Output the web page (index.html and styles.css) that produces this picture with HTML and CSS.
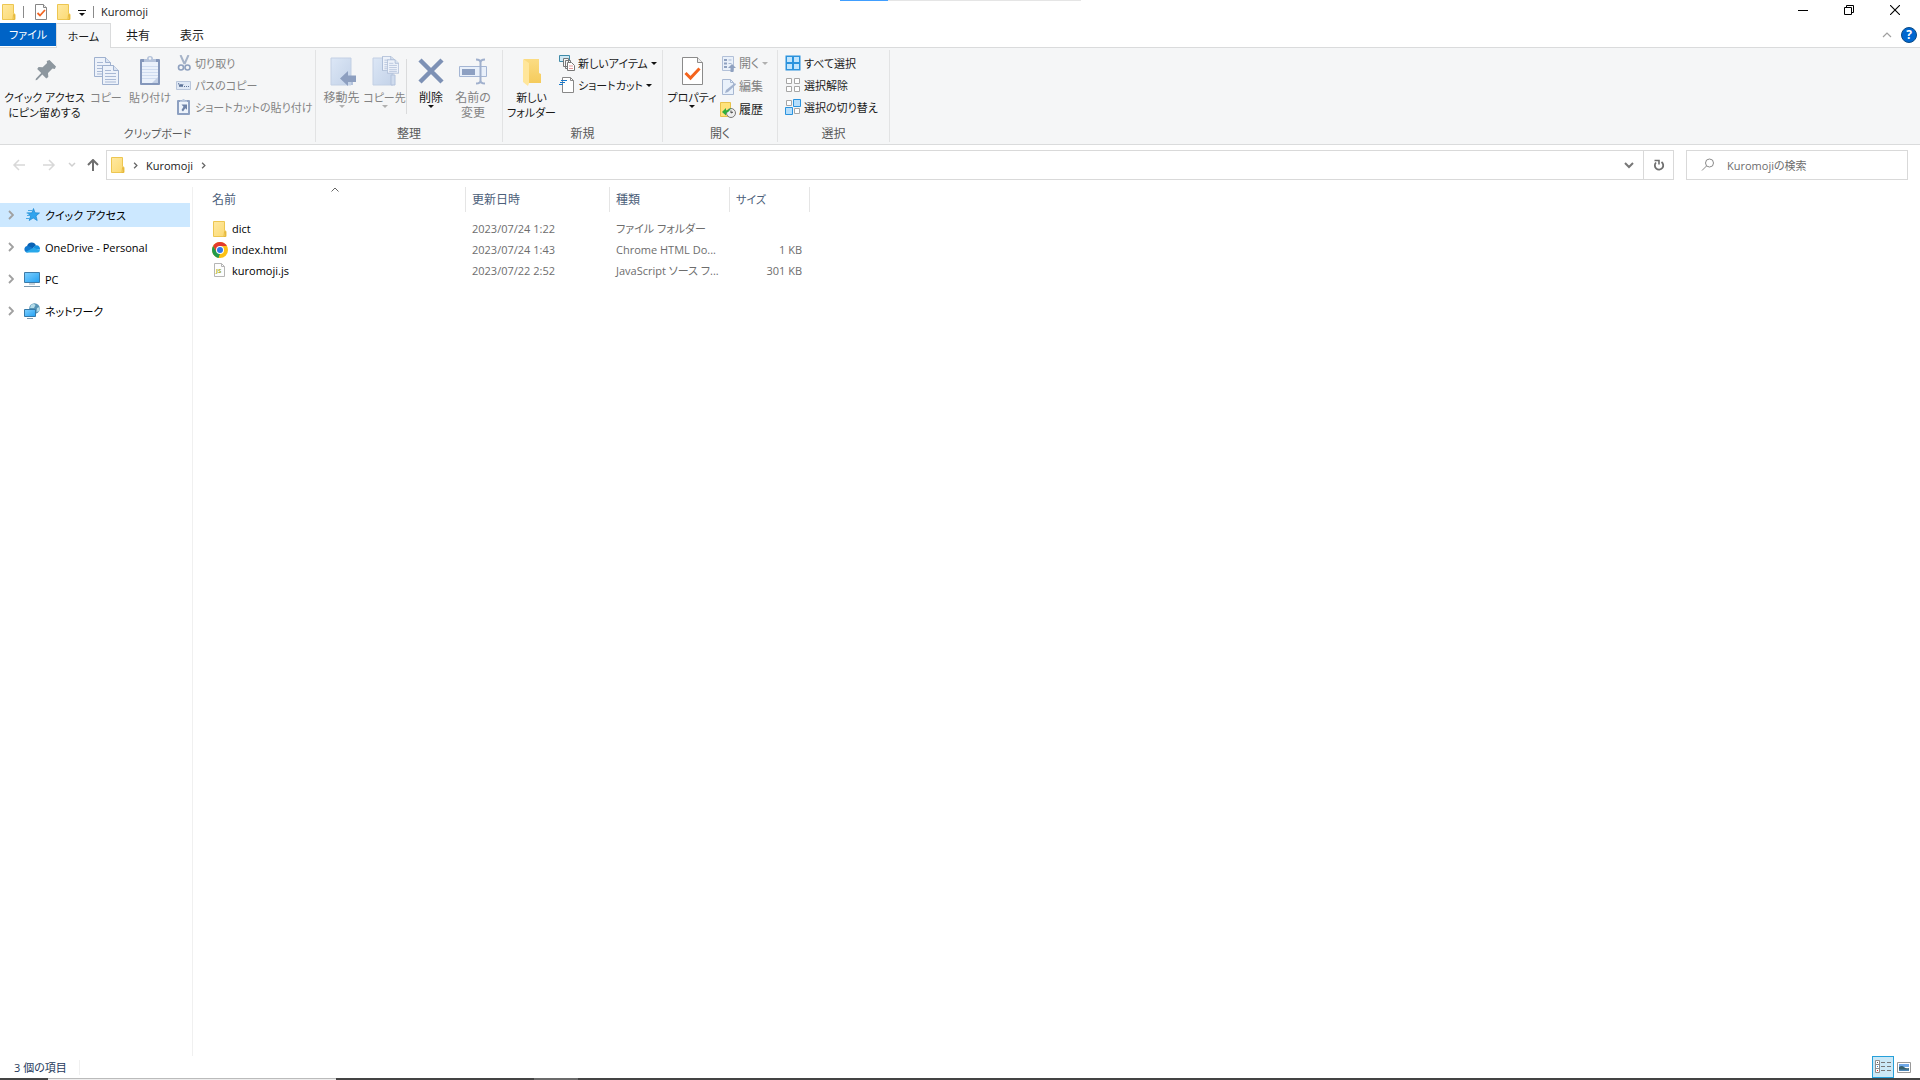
FILE: index.html
```html
<!DOCTYPE html>
<html lang="ja">
<head>
    <meta charset="UTF-8">
    <meta name="viewport" content="width=device-width, initial-scale=1.0">
    <title>Kuromoji</title>
    <link rel="stylesheet" href="styles.css">
</head>
<body>
    <!-- 共通アイコン -->
    <svg class="defs" aria-hidden="true">
        <defs>
            <linearGradient id="g-folder" x1="0" y1="0" x2="1" y2="1">
                <stop offset="0" stop-color="#ffe9a2"/>
                <stop offset="1" stop-color="#fbd970"/>
            </linearGradient>
            <linearGradient id="g-gold" x1="0" y1="0" x2="0" y2="1">
                <stop offset="0" stop-color="#fbdc83"/>
                <stop offset="1" stop-color="#f5cb5c"/>
            </linearGradient>
            <linearGradient id="g-blue" x1="0" y1="0" x2="1" y2="1">
                <stop offset="0" stop-color="#7fd0ff"/>
                <stop offset="1" stop-color="#22a0f2"/>
            </linearGradient>
            <linearGradient id="g-pale" x1="0" y1="0" x2="1" y2="1">
                <stop offset="0" stop-color="#dce7f6"/>
                <stop offset="1" stop-color="#c3d2e8"/>
            </linearGradient>
        </defs>
        <symbol id="folder" viewBox="0 0 14 16">
            <path d="M.5.5h11v9l1.500.8v5.200H.5z" fill="url(#g-folder)" stroke="#edc651"/>
            <path d="M11.500 10.500h1v5h-1.500z" fill="#fde38f" stroke="#e6b93c"/>
        </symbol>
        <symbol id="check-doc" viewBox="0 0 12 16">
            <path d="M.5.5h8l3 3v12H.5z" fill="#fff" stroke="#868686"/>
            <path d="M8.500.5v3h3" fill="#eee" stroke="#868686"/>
            <path d="M2.500 9l2.500 2.500L10 6" fill="none" stroke="#f26522" stroke-width="1.800"/>
        </symbol>
        <symbol id="chevron" viewBox="0 0 6 10">
            <path d="M1 1l4 4-4 4" fill="none" stroke="currentColor" stroke-width="1.800"/>
        </symbol>
        <symbol id="page" viewBox="0 0 17 20">
            <path d="M.5.5h11l5 5v14H.5z" fill="#edf2fa" stroke="#9fb1cf"/>
            <path d="M11.500.5v5h5" fill="#dbe4f2" stroke="#9fb1cf"/>
            <path d="M3 5.500h6M3 8.500h11M3 11.500h11M3 14.500h11M3 17h11" stroke="#a9b9d5"/>
        </symbol>
    </svg>

    <div class="loader"><span></span></div>

    <header class="titlebar">
        <svg width="14" height="16"><use href="#folder"/></svg>
        <span class="sep"></span>
        <button class="quick" aria-label="プロパティ"><svg width="12" height="16"><use href="#check-doc"/></svg></button>
        <button class="quick" aria-label="新しいフォルダー"><svg width="14" height="16"><use href="#folder"/></svg></button>
        <button class="quick customize" aria-label="カスタマイズ">
            <svg width="8" height="8" viewBox="0 0 8 8"><path d="M0 1.500h8" stroke="#111"/><path d="M1 4h6L4 7z" fill="#111"/></svg>
        </button>
        <span class="sep"></span>
        <h1>Kuromoji</h1>
        <div class="window-buttons">
            <button aria-label="最小化"><svg width="10" height="10" viewBox="0 0 10 10"><path d="M0 5.500h10" stroke="#000"/></svg></button>
            <button aria-label="元に戻す"><svg width="10" height="10" viewBox="0 0 10 10"><path d="M.5 2.500h7v7h-7zM2.500 2.500v-2h7v7h-2" fill="none" stroke="#000"/></svg></button>
            <button aria-label="閉じる"><svg width="10" height="10" viewBox="0 0 10 10"><path d="M0 0l10 10M10 0L0 10" stroke="#000" stroke-width="1.100"/></svg></button>
        </div>
    </header>

    <nav class="tabs">
        <button class="tab file">ファイル</button>
        <button class="tab active">ホーム</button>
        <button class="tab kanji">共有</button>
        <button class="tab kanji">表示</button>
        <div class="tabs-right">
            <button aria-label="リボンの最小化"><svg width="10" height="6" viewBox="0 0 10 6"><path d="M1 5l4-4 4 4" fill="none" stroke="#a0a0a0" stroke-width="1.200"/></svg></button>
            <button class="help" aria-label="ヘルプ">?</button>
        </div>
    </nav>

    <section class="ribbon">
        <div class="group g-clipboard">
            <div class="group-body">
                <button class="big wide">
                    <svg width="32" height="32" viewBox="0 0 32 32"><path d="M20.500 5l6.500 6.500-1.200 2.500-2.300-.4-4.500 4.500.3 4-2 1.400-4-4L8 25l-1.500.2L7 23.500l5.200-5.500-4-4 1.400-2 4 .3 4.500-4.400-.4-2z" fill="#8d979f"/></svg>
                    <span>クイック アクセス<br>にピン留めする</span>
                </button>
                <button class="big w-copy" disabled>
                    <svg width="32" height="32" viewBox="0 0 32 32">
                        <use href="#page" x="4" y="2" width="17" height="20"/>
                        <use href="#page" x="12" y="10" width="17" height="20"/>
                    </svg>
                    <span>コピー</span>
                </button>
                <button class="big w-paste" disabled>
                    <svg width="32" height="32" viewBox="0 0 32 32">
                        <rect x="6" y="4" width="20" height="26" rx="1" fill="#8497bb"/>
                        <path d="M8 7h16v21H8z" fill="#eaf1fb"/>
                        <path d="M8 11.500h16M8 14.500h16M8 17.500h16M8 20.500h16M8 23.500h16" stroke="#cfdcf0"/>
                        <path d="M18 28h6v-6z" fill="#c3d0e6"/>
                        <path d="M10 7V4h3a3 3 0 0 1 6 0h3v3z" fill="#b5c3db"/>
                        <circle cx="16" cy="3.500" r="1.200" fill="#f5f6f7"/>
                    </svg>
                    <span>貼り付け</span>
                </button>
                <div class="small-list">
                    <button disabled>
                        <svg width="16" height="16" viewBox="0 0 16 16"><path d="M4.500 0l4 9M12.500 0l-4 9" stroke="#a6b3c8" stroke-width="2"/><circle cx="5" cy="12.500" r="2.500" fill="none" stroke="#8fa1bf" stroke-width="1.600"/><circle cx="11.500" cy="12.500" r="2.500" fill="none" stroke="#8fa1bf" stroke-width="1.600"/></svg>
                        切り取り
                    </button>
                    <button disabled>
                        <svg width="16" height="16" viewBox="0 0 16 16"><path d="M.5 4.500h14v8H.5z" fill="#dfe8f5" stroke="#b9c6db"/><path d="M2.500 6l1.500 4 1-3 1 3 1-3M8 9.500h1M10 9.500h1M12 9.500h1" fill="none" stroke="#5e7499"/></svg>
                        パスのコピー
                    </button>
                    <button disabled>
                        <svg width="16" height="16" viewBox="0 0 16 16"><rect x="1" y="1" width="13" height="15" rx="1" fill="#8da0c1"/><path d="M3 3h9v11H3z" fill="#edf3fb"/><path d="M4 3V1.500h2a1.500 1.500 0 0 1 3 0h2V3z" fill="#b8c6dd"/><path d="M5.500 5.500H11v5.300L9.300 9.300 7 12.500 5.500 11l2-3.300z" fill="#6d82a8"/></svg>
                        ショートカットの貼り付け
                    </button>
                </div>
            </div>
            <div class="group-label">クリップボード</div>
        </div>

        <div class="group g-organize">
            <div class="group-body">
                <button class="big w-move kanji" disabled>
                    <svg width="32" height="32" viewBox="0 0 32 32"><path d="M5 3h20v27H5z" fill="url(#g-pale)" stroke="#c3d0e4"/><path d="M25 24h2v6h-2z" fill="#b3c2dc"/><path d="M14 23.500l8-7.500v4.500h8v6.500h-8V31z" fill="#8d9fc0"/></svg>
                    <span>移動先</span>
                    <i class="caret"></i>
                </button>
                <button class="big w-move" disabled>
                    <svg width="32" height="32" viewBox="0 0 32 32"><path d="M4 3h20v27H4z" fill="url(#g-pale)" stroke="#c3d0e4"/><path d="M22 20h4v10h-4z" fill="#cfdbed" stroke="#b3c2dc"/><use href="#page" x="13" y="1" width="13" height="15"/><use href="#page" x="18" y="4" width="12" height="15"/></svg>
                    <span>コピー先</span>
                    <i class="caret"></i>
                </button>
                <span class="divider"></span>
                <button class="big w-delete kanji">
                    <svg width="32" height="32" viewBox="0 0 32 32"><path d="M5 5l22 22M27 5L5 27" stroke="#7d91b5" stroke-width="4.500"/></svg>
                    <span>削除</span>
                    <i class="caret"></i>
                </button>
                <button class="big w-rename kanji" disabled>
                    <svg width="32" height="32" viewBox="0 0 32 32"><path d="M2.500 11.500h27v10h-27z" fill="#e9f0fa" stroke="#a5b6d4"/><path d="M5 14h13v6H5z" fill="#8da0c2"/><path d="M19 4.500q4.500 0 4.500 3v18q0 3-4.500 3M28 4.500q-4.500 0-4.500 3v18q0 3 4.500 3" fill="none" stroke="#a0b0cd" stroke-width="2"/></svg>
                    <span>名前の<br>変更</span>
                </button>
            </div>
            <div class="group-label kanji">整理</div>
        </div>

        <div class="group g-new">
            <div class="group-body">
                <button class="big w-new">
                    <svg width="32" height="32" viewBox="0 0 32 32"><path d="M8 4h15v14l2 1v9H9z" fill="url(#g-gold)"/><path d="M7 4l6 4v20l-1 3-5-4z" fill="#ffe69b"/></svg>
                    <span>新しい<br>フォルダー</span>
                </button>
                <div class="small-list">
                    <button>
                        <svg width="16" height="16" viewBox="0 0 16 16"><path d="M.5.5h10v6H.5z" fill="#cfe9f5" stroke="#3f8aa8"/><path d="M4.500 3.500h5v8h-5zM6.500 5.500h5v8h-5z" fill="#f6f6f6" stroke="#777"/><path d="M8.500 7.500h4l3 3v5h-7z" fill="#fff" stroke="#777"/><path d="M10 11h4M10 13.500h4" stroke="#e79b9b"/></svg>
                        新しいアイテム<i class="caret"></i>
                    </button>
                    <button>
                        <svg width="16" height="16" viewBox="0 0 16 16"><path d="M3.500.5h8l3 3v12h-11z" fill="#fff" stroke="#888"/><path d="M11.500.5v3h3" fill="none" stroke="#888"/><path d="M2 3.500h6M1 5.500h5M0 7.500h4" stroke="#1979ca"/></svg>
                        ショートカット<i class="caret"></i>
                    </button>
                </div>
            </div>
            <div class="group-label kanji">新規</div>
        </div>

        <div class="group g-open">
            <div class="group-body">
                <button class="big w-prop">
                    <svg width="32" height="32" viewBox="0 0 32 32"><path d="M6.500 2.500h15l5 5v22h-20z" fill="#fff" stroke="#8b8b8b"/><path d="M21.500 2.500v5h5" fill="#eee" stroke="#8b8b8b"/><path d="M9.500 18l5 5 9-9.500" fill="none" stroke="#f4641e" stroke-width="3"/></svg>
                    <span>プロパティ</span>
                    <i class="caret"></i>
                </button>
                <div class="small-list loose kanji">
                    <button disabled>
                        <svg width="16" height="16" viewBox="0 0 16 16"><path d="M2.500.5h11v14h-11z" fill="#eaf1fa" stroke="#b2c0d8"/><path d="M4 3h3v2H4zM4 6.500h3v2H4zM4 10h3v2H4z" fill="#8fa1c0"/><path d="M8.500 4h3M8.500 7.500h3" stroke="#a7b7d1"/><path d="M12 8l4 4h-2.500v4h-3v-4H8z" fill="#8fa1c0"/></svg>
                        開く<i class="caret"></i>
                    </button>
                    <button disabled>
                        <svg width="16" height="16" viewBox="0 0 16 16"><path d="M2.500.5h8l3 3v12h-11z" fill="#e9f1fb" stroke="#a8b8d2"/><path d="M10.500.5v3h3" fill="none" stroke="#a8b8d2"/><path d="M5 14l1-3 9-7 1 1.500-8 7.500z" fill="#a3b3ce"/></svg>
                        編集
                    </button>
                    <button>
                        <svg width="16" height="16" viewBox="0 0 16 16"><path d="M.5.5h10v14H.5z" fill="#ffe27a" stroke="#e8c14b"/><circle cx="11" cy="11" r="4.500" fill="#eee" stroke="#777"/><path d="M11 8.500V11l2-1" fill="none" stroke="#444"/><path d="M2 10l4-4v2.500q2.500-1 5-2.500-1.500 4-5 5v2.500z" fill="#2fae3f"/></svg>
                        履歴
                    </button>
                </div>
            </div>
            <div class="group-label kanji">開く</div>
        </div>

        <div class="group g-select">
            <div class="group-body">
                <div class="small-list">
                    <button>
                        <svg width="16" height="16" viewBox="0 0 16 16"><path d="M.5.5h15v15H.5z" fill="#2b93dd"/><path d="M2 2h5v5H2zM9 2h5v5H9zM2 9h5v5H2zM9 9h5v5H9z" fill="#c2e5fd"/></svg>
                        すべて選択
                    </button>
                    <button>
                        <svg width="16" height="16" viewBox="0 0 16 16"><path d="M1.500 1.500h5v5h-5zM9.500 1.500h5v5h-5zM1.500 9.500h5v5h-5zM9.500 9.500h5v5h-5z" fill="#fff" stroke="#a6a6a6"/></svg>
                        選択解除
                    </button>
                    <button>
                        <svg width="16" height="16" viewBox="0 0 16 16"><path d="M1.500 1.500h5v5h-5zM9.500 9.500h5v5h-5z" fill="#fff" stroke="#a6a6a6"/><path d="M8.500.5h7v7h-7zM.5 8.500h7v7h-7z" fill="#b5defc" stroke="#2b93dd"/></svg>
                        選択の切り替え
                    </button>
                </div>
            </div>
            <div class="group-label kanji">選択</div>
        </div>
    </section>

    <div class="addressbar">
        <button class="nav" aria-label="戻る" disabled><svg width="14" height="12" viewBox="0 0 14 12"><path d="M13 6H2M7 1L2 6l5 5" fill="none" stroke="#d8d8d8" stroke-width="1.500"/></svg></button>
        <button class="nav" aria-label="進む" disabled><svg width="14" height="12" viewBox="0 0 14 12"><path d="M1 6h11M7 1l5 5-5 5" fill="none" stroke="#d8d8d8" stroke-width="1.500"/></svg></button>
        <button class="nav recent" aria-label="最近表示した場所" disabled><svg width="8" height="6" viewBox="0 0 8 6"><path d="M1 1l3 3 3-3" fill="none" stroke="#cfcfcf" stroke-width="1.500"/></svg></button>
        <button class="nav up" aria-label="上へ"><svg width="12" height="12" viewBox="0 0 12 12"><path d="M6 12V2M1 6l5-5 5 5" fill="none" stroke="#6e6e6e" stroke-width="2"/></svg></button>
        <div class="address">
            <svg width="14" height="16"><use href="#folder"/></svg>
            <svg class="crumb-arrow" width="5" height="7"><use href="#chevron"/></svg>
            <a href="#">Kuromoji</a>
            <svg class="crumb-arrow" width="5" height="7"><use href="#chevron"/></svg>
            <button class="history" aria-label="以前の場所"><svg width="10" height="7" viewBox="0 0 10 7"><path d="M1 1l4 4 4-4" fill="none" stroke="#777" stroke-width="2"/></svg></button>
            <button class="refresh" aria-label="最新の情報に更新"><svg width="12" height="12" viewBox="0 0 12 12"><path d="M3 3.500A4.200 4.200 0 1 0 8.500 3" fill="none" stroke="#6e6e6e" stroke-width="1.800"/><path d="M1.500 1.500h4.500v4" fill="none" stroke="#6e6e6e" stroke-width="1.600"/></svg></button>
        </div>
        <label class="search">
            <svg width="14" height="14" viewBox="0 0 14 14"><circle cx="8.500" cy="5" r="4" fill="none" stroke="#8a8a8a"/><path d="M5.500 8L1 12.500" stroke="#8a8a8a"/></svg>
            <input type="text" placeholder="Kuromojiの検索" aria-label="Kuromojiの検索">
        </label>
    </div>

    <main class="content">
        <nav class="sidebar">
            <a href="#" class="selected">
                <svg class="chevron" width="6" height="10"><use href="#chevron"/></svg>
                <svg width="16" height="16" viewBox="0 0 16 16"><path d="M9.500 1.500l1.500 4.300 4.500.2-3.500 2.900 1.200 4.600-4-2.500-4 2.500 1.400-4.600L3.500 6l4.400-.2z" fill="#2fa4ee" stroke="#1a86d0" stroke-width=".7"/><path d="M4 3.500h4M2.500 6h3M3 8.500h3M2 11.500h4" stroke="#4aa9e4"/></svg>
                クイック アクセス
            </a>
            <a href="#">
                <svg class="chevron" width="6" height="10"><use href="#chevron"/></svg>
                <svg width="16" height="16" viewBox="0 0 16 16"><path d="M3 7.500a4.700 4.700 0 0 1 9-1.200L8 10z" fill="#0a62b4"/><path d="M3 13.500a3.300 3.300 0 0 1 .3-6.500Q5.500 6.800 10 10l-5 3z" fill="#1279cf"/><path d="M9 9.500q1.500-3.500 4-3.200a3.400 3.400 0 0 1 2.800 4.500z" fill="#1490df"/><path d="M1.500 13L9.500 8.800l6.300 2.200a2.300 2.300 0 0 1-2.300 2.500H3z" fill="#28a8ea"/></svg>
                OneDrive - Personal
            </a>
            <a href="#">
                <svg class="chevron" width="6" height="10"><use href="#chevron"/></svg>
                <svg width="16" height="16" viewBox="0 0 16 16"><path d="M.5 1.500h15v10H.5z" fill="url(#g-blue)" stroke="#3d7ba8"/><path d="M5 13h6" stroke="#8fa5b5"/><path d="M0 15.500h16" stroke="#7b98ad"/></svg>
                PC
            </a>
            <a href="#">
                <svg class="chevron" width="6" height="10"><use href="#chevron"/></svg>
                <svg width="16" height="16" viewBox="0 0 16 16"><circle cx="10.500" cy="5.500" r="5.300" fill="#5593b5"/><path d="M7 2q3-2 4.500 0L10 5H6zM13 5l2.500-1v4l-3 1z" fill="#b4dce9"/><path d="M.5 6.500h11v7H.5z" fill="url(#g-blue)" stroke="#3579a8"/><path d="M3 15.500h6" stroke="#7b98ad"/></svg>
                ネットワーク
            </a>
        </nav>

        <section class="files">
            <table>
                <colgroup><col class="c-name"><col class="c-date"><col class="c-type"><col class="c-size"></colgroup>
                <thead>
                    <tr>
                        <th class="kanji">名前<svg class="sort" width="8" height="5" viewBox="0 0 8 5"><path d="M.5 4.500L4 1l3.500 3.500" fill="none" stroke="#666"/></svg></th>
                        <th class="kanji">更新日時</th>
                        <th class="kanji">種類</th>
                        <th>サイズ</th>
                    </tr>
                </thead>
                <tbody>
                    <tr>
                        <td><span class="name"><svg width="16" height="16"><use href="#folder"/></svg>dict</span></td>
                        <td>2023/07/24 1:22</td>
                        <td>ファイル フォルダー</td>
                        <td></td>
                    </tr>
                    <tr>
                        <td><span class="name"><svg width="16" height="16" viewBox="0 0 16 16"><circle cx="8" cy="8" r="8" fill="#fbc116"/><path d="M1.100 4A8 8 0 0 1 14.900 4H8L4.600 10z" fill="#e33b2e"/><path d="M1.100 4L4.600 10 8 12l-1.200 3.900A8 8 0 0 1 1.100 4z" fill="#229a4b"/><path d="M11.400 10L8 16l-1.500-.2L9 11z" fill="#fbc116"/><circle cx="8" cy="8" r="4" fill="#fff"/><circle cx="8" cy="8" r="3" fill="#2f78ea"/></svg>index.html</span></td>
                        <td>2023/07/24 1:43</td>
                        <td>Chrome HTML Do...</td>
                        <td>1 KB</td>
                    </tr>
                    <tr>
                        <td><span class="name"><svg width="16" height="16" viewBox="0 0 16 16"><path d="M2.500.5h7l3 3v10h-10z" fill="#fdfdfd" stroke="#b5b5b5"/><path d="M9.500.5v3h3" fill="none" stroke="#b5b5b5"/><text x="4" y="10" class="js">JS</text></svg>kuromoji.js</span></td>
                        <td>2023/07/22 2:52</td>
                        <td>JavaScript ソース フ...</td>
                        <td>301 KB</td>
                    </tr>
                </tbody>
            </table>
        </section>
    </main>

    <footer class="statusbar">
        <span class="count">3 個の項目</span>
        <div class="views">
            <button class="on" aria-label="詳細"><svg width="16" height="14" viewBox="0 0 16 14"><path d="M.5.5h4v12h-4zM.5 4.500h4M.5 8.500h4" fill="#fff" stroke="#8c8c8c"/><path d="M6 2.500h4M12 2.500h4M6 6.500h4M12 6.500h4M6 10.500h4M12 10.500h4" stroke="#777"/><path d="M2 2h1v1H2z" fill="#555"/><path d="M2 6h1v1H2z" fill="#2b93dd"/><path d="M2 10h1v1H2z" fill="#d22"/></svg></button>
            <button aria-label="大アイコン"><svg width="14" height="11" viewBox="0 0 14 11"><path d="M.5.5h13v10H.5z" fill="#fff" stroke="#999"/><path d="M2 2h10v3H2z" fill="#6fa8e8"/><path d="M2 5q3-2 5 0t5 1v3H2z" fill="#355f6b"/><path d="M2 7.500h10V9H2z" fill="#4f87b5"/></svg></button>
        </div>
    </footer>

    <div class="taskbar"><span class="t-start"></span><span class="t-search"></span><span class="t-gap"></span><span class="t-app"></span></div>
</body>
</html>
```
FILE: styles.css
```css
/* 全体 */
* {
    box-sizing: border-box;
}

body {
    margin: 0;
    min-height: 100vh;
    display: flex;
    flex-direction: column;
    background: #fff;
    color: #1a1a1a;
    font-family: "Open Sans", "Noto Sans CJK JP", sans-serif;
    font-size: 11px;
    line-height: 15px;
    font-feature-settings: "palt";
}

button, input {
    margin: 0;
    padding: 0;
    border: none;
    background: none;
    color: inherit;
    font: inherit;
    font-feature-settings: inherit;
}

a {
    color: inherit;
    text-decoration: none;
}

svg {
    flex: none;
    display: block;
}

/* 漢字だけの見出しは少し大きく */
.kanji {
    font-size: 12px;
}

.defs {
    position: absolute;
    width: 0;
    height: 0;
}

/* 上端の進行バー */
.loader {
    position: absolute;
    top: 0;
    left: 840px;
    width: 241px;
    height: 1px;
    background: #e5e5e5;
}

.loader span {
    display: block;
    width: 20%;
    height: 1px;
    background: #409eff;
}

/* タイトルバー */
.titlebar {
    display: flex;
    align-items: center;
    height: 23px;
    padding-left: 2px;
}

.titlebar .sep {
    width: 1px;
    height: 12px;
    margin: 0 7px;
    background: #8a8a8a;
}

.titlebar .quick {
    display: flex;
    margin-left: 4px;
    margin-right: 6px;
}

.titlebar .customize {
    margin: 2px 0 0 1px;
}

.titlebar h1 {
    margin: 0;
    font-size: 11px;
    font-weight: 400;
}

.window-buttons {
    display: flex;
    align-self: flex-start;
    margin-left: auto;
    padding-right: 2px;
}

.window-buttons button {
    display: grid;
    place-items: center;
    width: 46px;
    height: 20px;
}

/* タブ */
.tabs {
    display: flex;
    height: 25px;
    border-bottom: 1px solid #dadbdc;
}

.tab {
    width: 54px;
    height: 24px;
}

.tab.file {
    width: 56px;
    height: 23px;
    background: #0063c6;
    color: #fff;
}

.tab.active {
    width: 55px;
    height: 25px;
    border: 1px solid #dadbdc;
    border-bottom: none;
    background: #f5f6f7;
}

.tabs-right {
    display: flex;
    align-items: center;
    gap: 9px;
    margin-left: auto;
    padding-right: 3px;
}

.help {
    width: 16px;
    height: 16px;
    border: 1px solid #0a4a86;
    border-radius: 50%;
    background: #0067d0;
    color: #fff;
    font-size: 12px;
    font-weight: 700;
    line-height: 14px;
}

/* リボン */
.ribbon {
    display: flex;
    height: 97px;
    padding-top: 2px;
    background: #f5f6f7;
    border-bottom: 1px solid #dadbdc;
}

.group {
    display: flex;
    flex: none;
    flex-direction: column;
    height: 92px;
    border-right: 1px solid #e2e3e4;
}

.g-clipboard { width: 316px; }
.g-organize { width: 187px; }
.g-new { width: 160px; }
.g-open { width: 115px; }
.g-select { width: 112px; }

.group-body {
    display: flex;
    height: 76px;
    padding-left: 4px;
}

.group-label {
    color: #5a5a5a;
    text-align: center;
}

.big {
    display: flex;
    flex: none;
    flex-direction: column;
    align-items: center;
    padding-top: 5px;
    white-space: nowrap;
}

.big span {
    margin-top: 3px;
}

.big.wide { width: 81px; }
.w-copy { width: 42px; }
.w-paste { width: 46px; }
.w-move { width: 43px; }
.w-delete { width: 48px; }
.w-rename { width: 36px; }
.w-new { width: 49px; }
.w-prop { width: 50px; }

.ribbon button:disabled {
    color: #838383;
}

.caret {
    border: 3px solid transparent;
    border-top-color: #111;
    border-bottom: none;
}

button:disabled .caret {
    border-top-color: #b0b0b0;
}

.divider {
    width: 1px;
    height: 55px;
    margin-top: 9px;
    background: #dadbdc;
}

.small-list {
    display: flex;
    flex-direction: column;
    padding: 2px 0 0 3px;
}

.small-list button {
    display: flex;
    align-items: center;
    gap: 3px;
    height: 22px;
    white-space: nowrap;
}

.small-list.loose button {
    height: 23px;
}

.g-select .small-list {
    padding-left: 3px;
}

/* アドレスバー */
.addressbar {
    display: flex;
    align-items: center;
    height: 42px;
    padding: 0 12px 2px 4px;
}

.nav {
    display: grid;
    place-items: center;
    width: 30px;
    height: 30px;
}

.nav.recent {
    width: 16px;
}

.nav.up {
    width: 26px;
}

.address {
    display: flex;
    align-items: center;
    flex: 1;
    height: 30px;
    padding-left: 4px;
    border: 1px solid #d9d9d9;
}

.crumb-arrow {
    margin: 0 8px;
    color: #666;
}

.history, .refresh {
    display: grid;
    place-items: center;
    width: 29px;
    height: 28px;
}

.history {
    margin-left: auto;
}

.refresh {
    width: 30px;
    border-left: 1px solid #d9d9d9;
}

.search {
    display: flex;
    align-items: center;
    gap: 12px;
    width: 222px;
    height: 30px;
    margin-left: 12px;
    padding-left: 14px;
    border: 1px solid #d9d9d9;
}

.search input {
    flex: 1;
    min-width: 0;
    outline: none;
}

.search input::placeholder {
    color: #6d6d6d;
    opacity: 1;
}

/* ナビゲーションと一覧 */
.content {
    display: flex;
    flex: 1;
}

.sidebar {
    display: flex;
    flex-direction: column;
    gap: 8px;
    width: 193px;
    padding: 16px 2px 0 0;
    border-right: 1px solid #f0f0f0;
}

.sidebar a {
    display: flex;
    align-items: center;
    gap: 5px;
    height: 24px;
    padding-left: 8px;
    color: #000;
    white-space: nowrap;
}

.sidebar .selected {
    background: #cce8ff;
}

.chevron {
    margin-right: 5px;
    color: #a0a0a0;
}

.files {
    flex: 1;
    padding-left: 19px;
}

table {
    width: 598px;
    table-layout: fixed;
    border-spacing: 0;
}

.c-name { width: 254px; }
.c-date { width: 144px; }
.c-type { width: 120px; }
.c-size { width: 80px; }

th {
    position: relative;
    height: 25px;
    padding: 0 6px;
    border-right: 1px solid #e5e5e5;
    color: #4c607a;
    font-weight: 400;
    text-align: left;
}

tbody::before {
    content: "";
    display: block;
    height: 6px;
}

td {
    height: 21px;
    padding: 0 6px;
    color: #6d6d6d;
    white-space: nowrap;
}

th:first-child, td:first-child {
    padding-left: 0;
}

td:last-child {
    padding-right: 8px;
    text-align: right;
}

.sort {
    position: absolute;
    top: 0;
    left: 119px;
}

.name {
    display: flex;
    align-items: center;
    gap: 4px;
    color: #000;
}

.js {
    font-size: 6px;
    font-weight: 700;
    fill: #a9b01e;
}

/* ステータスバー */
.statusbar {
    display: flex;
    align-items: center;
    height: 22px;
    padding: 0 6px 0 14px;
}

.count {
    padding-right: 12px;
    border-right: 1px solid #f0f0f0;
    color: #1e395b;
}

.views {
    display: flex;
    margin-left: auto;
}

.views button {
    display: grid;
    place-items: center;
    width: 20px;
    height: 22px;
}

.views .on {
    width: 22px;
    border: 1px solid #26a0da;
    background: #cbe8f6;
}

/* タスクバーの上端 */
.taskbar {
    display: flex;
    height: 2px;
    background: #444;
}

.t-start { width: 48px; }
.t-search { width: 288px; background: #eee; border-top: 1px solid #bbb; }
.t-gap { width: 198px; }
.t-app { width: 44px; background: #6b6b6b; }
```
